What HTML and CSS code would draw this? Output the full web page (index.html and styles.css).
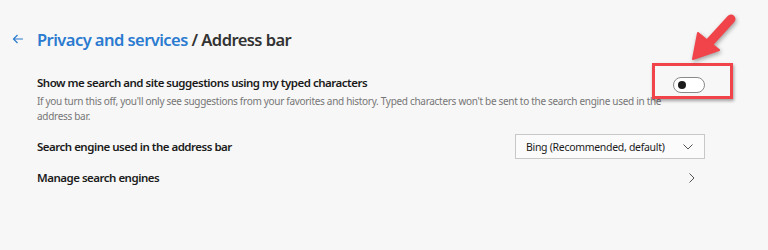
FILE: index.html
```html
<!DOCTYPE html>
<html>
<head>
  <meta charset="utf-8">
  <title>Address bar</title>
  <link rel="stylesheet" href="styles.css">
</head>
<body>
  <div class="page">
    <div class="crumbs">
      <span class="back">
        <svg width="12" height="12" viewBox="0 0 12 12"><path d="M11 6H1.5M5.5 2L1.5 6L5.5 10" fill="none" stroke="#2b7bd0" stroke-width="1.2"/></svg>
      </span>
      <a class="crumb-link">Privacy and services</a>
      <span class="crumb-here">&nbsp;/ Address bar</span>
    </div>

    <div class="row row-toggle">
      <div class="row-text">
        <div class="label">Show me search and site suggestions using my typed characters</div>
        <div class="desc">If you turn this off, you'll only see suggestions from your favorites and history. Typed characters won't be sent to the search engine used in the address bar.</div>
      </div>
      <div class="toggle"><span class="knob"></span></div>
    </div>

    <div class="row row-select">
      <div class="label">Search engine used in the address bar</div>
      <div class="select">
        Bing (Recommended, default)
        <svg width="10" height="6" viewBox="0 0 10 6"><path d="M0.5 0.5L5 5L9.5 0.5" fill="none" stroke="#555" stroke-width="1"/></svg>
      </div>
    </div>

    <div class="row row-link">
      <div class="label">Manage search engines</div>
      <svg class="chev" width="6" height="10" viewBox="0 0 6 10"><path d="M0.5 0.5L5 5L0.5 9.5" fill="none" stroke="#555" stroke-width="1"/></svg>
    </div>
  </div>

  <!-- annotation -->
  <div class="mark"></div>
  <svg class="arrow" width="80" height="60" viewBox="0 0 80 60">
    <path d="M73 7L52 30" stroke="#f0444a" stroke-width="9" stroke-linecap="round"/>
    <path d="M35 47L40 21L61 38Z" fill="#f0444a" stroke="#f0444a" stroke-width="2" stroke-linejoin="round"/>
  </svg>
</body>
</html>
```

FILE: styles.css
```css
html, body {
  margin: 0;
  padding: 0;
}

body {
  background-color: #f7f7f7;
  font-family: "Noto Sans", "Open Sans", sans-serif;
  color: #1b1b1b;
  width: 768px;
  height: 250px;
  overflow: hidden;
  position: relative;
}

.page {
  padding: 25px 63px 0 12px;
}

.crumbs {
  display: flex;
  align-items: center;
  font-size: 16.5px;
  font-weight: 600;
  letter-spacing: -0.55px;
  height: 28px;
}

.back {
  width: 25px;
  display: flex;
  align-items: center;
}

.crumb-link {
  color: #2b7bd0;
}

.crumb-here {
  color: #333;
}

.row {
  display: flex;
  justify-content: space-between;
  align-items: center;
  padding-left: 25px;
}

.row-toggle {
  align-items: flex-start;
  margin-top: 22px;
}

.label {
  font-size: 11.5px;
  font-weight: 600;
  letter-spacing: -0.5px;
  line-height: 16px;
}

.desc {
  font-size: 10px;
  color: #767676;
  line-height: 15px;
  letter-spacing: -0.3px;
  margin-top: 3px;
  width: 625px;
}

.toggle {
  width: 30px;
  height: 14px;
  border: 1px solid #8a8a8a;
  border-radius: 9px;
  background: #fff;
  margin-top: 2px;
  position: relative;
  flex-shrink: 0;
}

.knob {
  position: absolute;
  left: 4px;
  top: 3px;
  width: 8px;
  height: 8px;
  border-radius: 50%;
  background: #1b1b1b;
}

.row-select {
  margin-top: 10px;
}

.select {
  width: 190px;
  height: 25px;
  box-sizing: border-box;
  border: 1px solid #c8c8c8;
  background: #fbfbfb;
  font-size: 10.5px;
  letter-spacing: -0.3px;
  display: flex;
  align-items: center;
  justify-content: space-between;
  padding: 0 11px 0 10px;
}

.row-link {
  margin-top: 11px;
}

.chev {
  margin-right: 10px;
}

.mark {
  position: absolute;
  left: 652px;
  top: 63px;
  width: 81px;
  height: 36px;
  box-sizing: border-box;
  border: 3px solid #f0444a;
  box-shadow: 1px 2px 3px rgba(0, 0, 0, 0.35);
}

.arrow {
  position: absolute;
  left: 658px;
  top: 12px;
  filter: drop-shadow(1px 2px 2px rgba(0, 0, 0, 0.35));
}
```
